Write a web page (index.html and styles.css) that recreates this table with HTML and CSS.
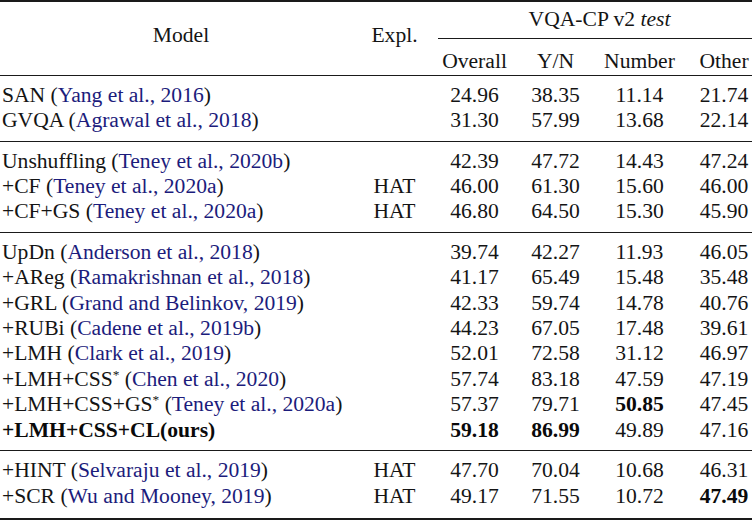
FILE: index.html
```html
<!DOCTYPE html>
<html lang="en">
<head>
<meta charset="utf-8">
<title>VQA-CP v2 results</title>
<link rel="stylesheet" href="styles.css">
</head>
<body>
<table class="results">
  <colgroup>
    <col class="c-model">
    <col class="c-expl">
    <col class="c-overall">
    <col class="c-yn">
    <col class="c-number">
    <col class="c-other">
  </colgroup>
  <thead>
    <tr class="h1">
      <th class="model-h" rowspan="2">Model</th>
      <th class="expl-h" rowspan="2">Expl.</th>
      <th class="group-h" colspan="4"><div class="cmid">VQA-CP v2 <i>test</i></div></th>
    </tr>
    <tr class="h2">
      <th>Overall</th>
      <th>Y/N</th>
      <th>Number</th>
      <th>Other</th>
    </tr>
  </thead>
  <tbody>
    <tr><td class="m">SAN (<span class="cite">Yang et al., 2016</span>)</td><td></td><td>24.96</td><td>38.35</td><td>11.14</td><td>21.74</td></tr>
    <tr><td class="m">GVQA (<span class="cite">Agrawal et al., 2018</span>)</td><td></td><td>31.30</td><td>57.99</td><td>13.68</td><td>22.14</td></tr>
  </tbody>
  <tbody>
    <tr><td class="m">Unshuffling (<span class="cite">Teney et al., 2020b</span>)</td><td></td><td>42.39</td><td>47.72</td><td>14.43</td><td>47.24</td></tr>
    <tr><td class="m">+CF (<span class="cite">Teney et al., 2020a</span>)</td><td>HAT</td><td>46.00</td><td>61.30</td><td>15.60</td><td>46.00</td></tr>
    <tr><td class="m">+CF+GS (<span class="cite">Teney et al., 2020a</span>)</td><td>HAT</td><td>46.80</td><td>64.50</td><td>15.30</td><td>45.90</td></tr>
  </tbody>
  <tbody>
    <tr><td class="m">UpDn (<span class="cite">Anderson et al., 2018</span>)</td><td></td><td>39.74</td><td>42.27</td><td>11.93</td><td>46.05</td></tr>
    <tr><td class="m">+AReg (<span class="cite">Ramakrishnan et al., 2018</span>)</td><td></td><td>41.17</td><td>65.49</td><td>15.48</td><td>35.48</td></tr>
    <tr><td class="m">+GRL (<span class="cite">Grand and Belinkov, 2019</span>)</td><td></td><td>42.33</td><td>59.74</td><td>14.78</td><td>40.76</td></tr>
    <tr><td class="m">+RUBi (<span class="cite">Cadene et al., 2019b</span>)</td><td></td><td>44.23</td><td>67.05</td><td>17.48</td><td>39.61</td></tr>
    <tr><td class="m">+LMH (<span class="cite">Clark et al., 2019</span>)</td><td></td><td>52.01</td><td>72.58</td><td>31.12</td><td>46.97</td></tr>
    <tr><td class="m">+LMH+CSS<sup>*</sup> (<span class="cite">Chen et al., 2020</span>)</td><td></td><td>57.74</td><td>83.18</td><td>47.59</td><td>47.19</td></tr>
    <tr><td class="m">+LMH+CSS+GS<sup>*</sup> (<span class="cite">Teney et al., 2020a</span>)</td><td></td><td>57.37</td><td>79.71</td><td><b>50.85</b></td><td>47.45</td></tr>
    <tr><td class="m"><b>+LMH+CSS+CL(ours)</b></td><td></td><td><b>59.18</b></td><td><b>86.99</b></td><td>49.89</td><td>47.16</td></tr>
  </tbody>
  <tbody class="last">
    <tr><td class="m">+HINT (<span class="cite">Selvaraju et al., 2019</span>)</td><td>HAT</td><td>47.70</td><td>70.04</td><td>10.68</td><td>46.31</td></tr>
    <tr><td class="m">+SCR (<span class="cite">Wu and Mooney, 2019</span>)</td><td>HAT</td><td>49.17</td><td>71.55</td><td>10.72</td><td><b>47.49</b></td></tr>
  </tbody>
</table>
</body>
</html>
```

FILE: styles.css
```css
html, body {
  margin: 0;
  padding: 0;
  background: #ffffff;
  overflow: hidden;
}

body {
  width: 752px;
  height: 531px;
}

.results {
  margin-left: -11px;
  margin-top: 0;
  width: 772px;
  table-layout: fixed;
  border-collapse: collapse;
  font-family: "Liberation Serif", "Times New Roman", serif;
  font-size: 21.6px;
  line-height: 25.4px;
  color: #141414;
  border-top: 2px solid #1a1a1a;
  border-bottom: 2px solid #1a1a1a;
}

.c-model { width: 370px; }
.c-expl { width: 71px; }
.c-overall { width: 89px; }
.c-yn { width: 73px; }
.c-number { width: 95px; }
.c-other { width: 74px; }

th, td {
  padding: 0;
  text-align: center;
  white-space: nowrap;
  font-weight: normal;
}

td.m {
  text-align: left;
  padding-left: 13px;
}

thead .h1 th {
  padding-top: 5px;
}

.model-h,
.expl-h {
  vertical-align: middle;
  padding-bottom: 10px;
}

.model-h {
  padding-left: 14px;
}

.group-h {
  padding-top: 6px;
}

.cmid {
  margin-left: 8px;
  padding-bottom: 6px;
  border-bottom: 1px solid #1a1a1a;
}

thead .h2 th {
  padding-top: 10px;
  padding-bottom: 0;
}

tbody {
  border-top: 1px solid #1a1a1a;
}

tbody tr:first-child td {
  padding-top: 7px;
}

tbody tr:last-child td {
  padding-bottom: 7px;
}

tbody.last tr:last-child td {
  padding-bottom: 9px;
}

.cite {
  color: #1c1c7c;
}

b {
  font-weight: bold;
  color: #0a0a0a;
}

sup {
  font-size: 0.62em;
  line-height: 0;
  vertical-align: 0.55em;
}
```
